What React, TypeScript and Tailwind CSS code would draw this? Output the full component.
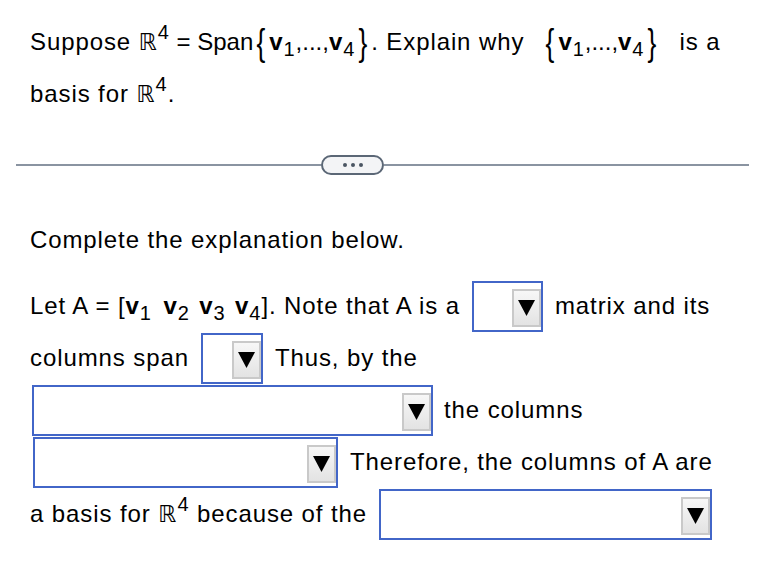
import React from "react";

const Dd = ({ w }: { w: string }) => (
  <div className={`${w} h-[51px] shrink-0 border-2 border-[#4266c8] bg-white flex justify-end items-center`}>
    <div className="mt-[3px] w-[29px] h-[38px] border-2 border-[#c9c9c9] bg-gradient-to-b from-[#f7f7f7] to-[#e3e3e3] flex items-center justify-center">
      <svg width="17" height="16" viewBox="0 0 17 16">
        <polygon points="0,0 17,0 8.5,16" fill="#000" />
      </svg>
    </div>
  </div>
);

const R4 = () => (
  <span className="whitespace-nowrap">
    <span className="font-['DejaVu_Sans'] tracking-normal text-[23px]">ℝ</span>
    <span className="text-[20px] relative top-[-11px] ml-[1px]">4</span>
  </span>
);

const V = ({ n, cls = "" }: { n: string; cls?: string }) => (
  <span className={`whitespace-nowrap ${cls}`}>
    <b className="font-bold">v</b>
    <span className="text-[20px] relative top-[6px]">{n}</span>
  </span>
);

const Brace = ({ c }: { c: string }) => (
  <span className="inline-block text-[24px] leading-none tracking-normal scale-y-[1.5] scale-x-[1.1] relative top-[1px] mx-[4px]">{c}</span>
);

const SetV = () => (
  <span className="inline-flex items-center whitespace-nowrap">
    <Brace c="{" />
    <V n="1" />
    <span className="tracking-normal">,...,</span>
    <V n="4" />
    <Brace c="}" />
  </span>
);

export default function App() {
  return (
    <div className="w-[758px] h-[574px] bg-white text-black font-['Liberation_Sans',Arial,sans-serif] text-[24px] tracking-[0.9px] overflow-hidden">
      <div className="pt-[16px] pl-[30px]">
        <div className="h-[52px] flex items-center whitespace-pre">
          <span>Suppose </span>
          <R4 />
          <span className="tracking-normal"> = Span</span>
          <SetV />
          <span className="mr-[3px]">. Explain why  </span>
          <SetV />
          <span className="ml-[4px]">  is a</span>
        </div>
        <div className="h-[52px] flex items-center whitespace-pre">
          <span>basis for </span>
          <R4 />
          <span>.</span>
        </div>
      </div>

      <div className="mt-[35px] h-[20px] flex items-center pl-[16px] pr-[9px]">
        <div className="w-[305px] h-[2px] bg-[#8a94a1]" />
        <div className="w-[63px] h-[20px] rounded-full border-2 border-[#5b6776] bg-[#f3f4f6] flex items-center justify-center gap-[4px]">
          <span className="w-[4px] h-[4px] rounded-full bg-[#4b5563]" />
          <span className="w-[4px] h-[4px] rounded-full bg-[#4b5563]" />
          <span className="w-[4px] h-[4px] rounded-full bg-[#4b5563]" />
        </div>
        <div className="flex-1 h-[2px] bg-[#8a94a1]" />
      </div>

      <div className="mt-[39px] pl-[30px] h-[52px] flex items-center">Complete the explanation below.</div>

      <div className="mt-[14px] pl-[30px] flex flex-col">
        <div className="h-[52px] flex items-center gap-[12px] whitespace-pre">
          <span>
            Let A = [<V n="1" /> <V n="2" cls="ml-[4px]" /> <V n="3" cls="ml-[2px]" /> <V n="4" cls="ml-[2px]" />]. Note that A is a
          </span>
          <Dd w="w-[71px]" />
          <span>matrix and its</span>
        </div>
        <div className="h-[52px] flex items-center gap-[12px] whitespace-pre">
          <span>columns span</span>
          <Dd w="w-[62px]" />
          <span>Thus, by the</span>
        </div>
        <div className="h-[52px] flex items-center gap-[11px] whitespace-pre ml-[2px]">
          <Dd w="w-[401px]" />
          <span>the columns</span>
        </div>
        <div className="h-[52px] flex items-center gap-[12px] whitespace-pre ml-[3px]">
          <Dd w="w-[305px]" />
          <span>Therefore, the columns of A are</span>
        </div>
        <div className="h-[52px] flex items-center gap-[12px] whitespace-pre">
          <span>
            a basis for <R4 /> because of the
          </span>
          <Dd w="w-[333px]" />
        </div>
      </div>
    </div>
  );
}
